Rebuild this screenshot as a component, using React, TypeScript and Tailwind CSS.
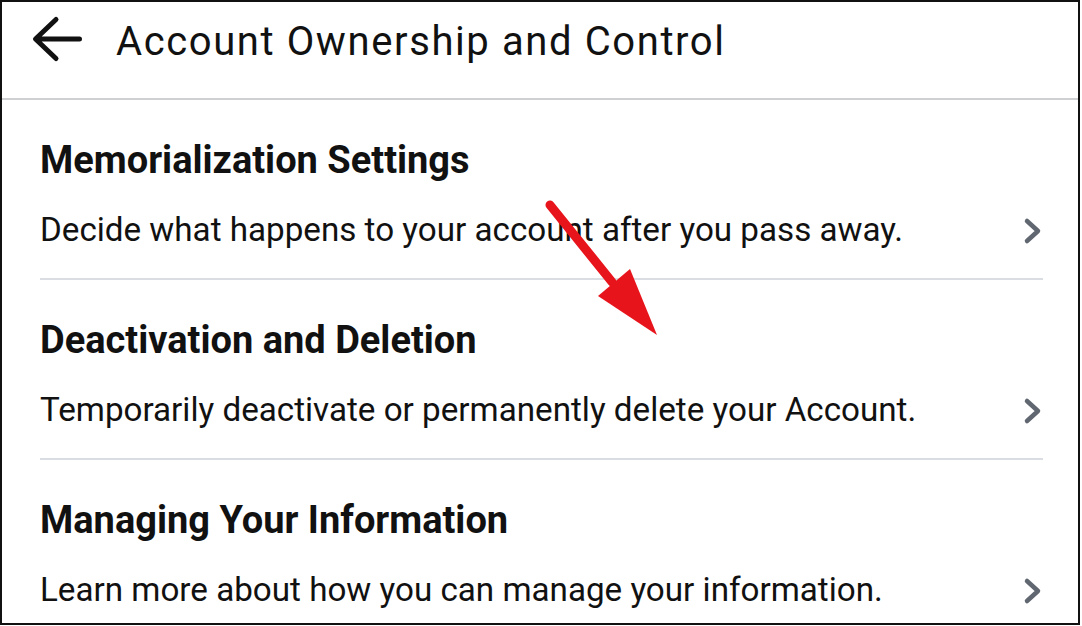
const items = [
  {
    title: "Memorialization Settings",
    desc: "Decide what happens to your account after you pass away.",
  },
  {
    title: "Deactivation and Deletion",
    desc: "Temporarily deactivate or permanently delete your Account.",
  },
  {
    title: "Managing Your Information",
    desc: "Learn more about how you can manage your information.",
  },
];

function Chevron() {
  return (
    <svg width="22" height="30" viewBox="0 0 22 30" className="mt-[116px] shrink-0">
      <path
        d="M6 5l11 10-11 10"
        fill="none"
        stroke="#606770"
        strokeWidth="4.5"
        strokeLinecap="round"
        strokeLinejoin="round"
      />
    </svg>
  );
}

export default function App() {
  return (
    <div className="w-[1082px] h-[626px] bg-white font-['Roboto',sans-serif] text-[#111]">
      <div className="relative w-[1080px] h-[625px] border-2 border-[#111] overflow-hidden">
        {/* header */}
        <div className="h-[98px] flex items-start border-b-2 border-[#cfd0d2]">
          <svg width="54" height="48" viewBox="0 0 54 48" className="ml-[29px] mt-[13px] shrink-0">
            <path
              d="M48.5 24H5M25 4.5L4.5 24L25 43.5"
              fill="none"
              stroke="#111"
              strokeWidth="5"
              strokeLinecap="round"
              strokeLinejoin="round"
            />
          </svg>
          <h1 className="ml-[31px] mt-[20px] text-[40px] leading-none tracking-[1.6px]">
            Account Ownership and Control
          </h1>
        </div>

        <div className="pl-[38px] pr-[35px]">
          {items.map((item, i) => (
            <div
              key={i}
              className={`h-[180px] flex items-start ${
                i < items.length - 1 ? "border-b-2 border-[#dadde1]" : ""
              }`}
            >
              <div className="flex-1 pt-[41px]">
                <div className="text-[38px] font-bold leading-none mb-[34px]">
                  {item.title}
                </div>
                <div className="text-[33.2px] leading-none">{item.desc}</div>
              </div>
              <Chevron />
            </div>
          ))}
        </div>

        {/* red arrow annotation */}
        <svg
          className="absolute left-0 top-0 pointer-events-none"
          width="1080"
          height="625"
        >
          <line
            x1="548"
            y1="203"
            x2="610"
            y2="280"
            stroke="#e8141c"
            strokeWidth="9"
            strokeLinecap="round"
          />
          <polygon points="596,294 628,267 655,333" fill="#e8141c" />
        </svg>
      </div>
    </div>
  );
}
